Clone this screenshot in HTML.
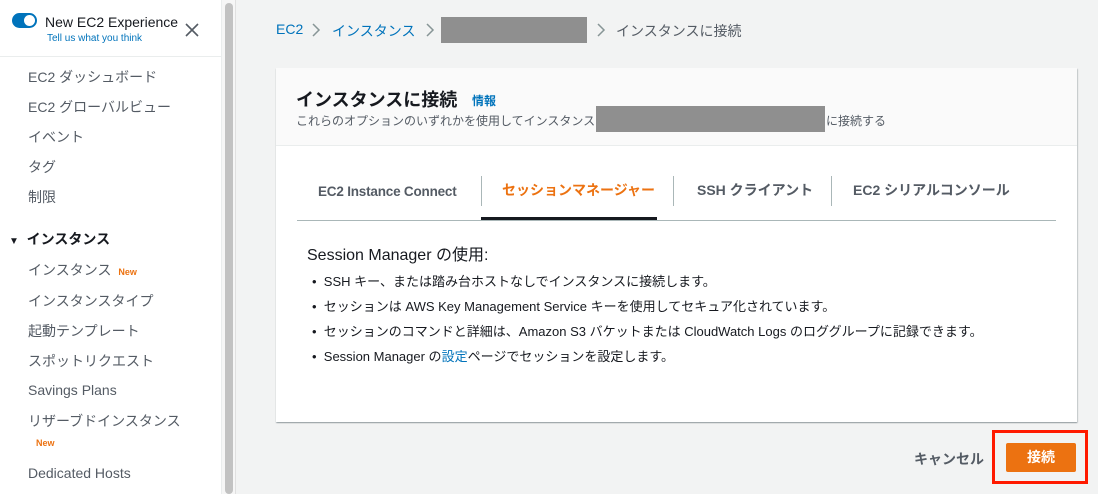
<!DOCTYPE html>
<html><head><meta charset="utf-8"><style>
*{margin:0;padding:0;box-sizing:border-box}
body{width:1098px;height:494px;overflow:hidden;background:#f2f3f3;font-family:"Liberation Sans","Noto Sans CJK JP",sans-serif;position:relative;color:#16191f}
.abs{position:absolute;white-space:nowrap}
#side{position:absolute;left:0;top:0;width:222px;height:494px;background:#fff;border-right:1px solid #eaeded}
#sb{position:absolute;left:222px;top:0;width:14px;height:494px;background:#f6f6f6;border-right:1px solid #e0e0e0}
#sb div{position:absolute;left:3px;top:3px;width:8px;height:491px;border-radius:4px;background:#c2c2c2}
.nav{position:absolute;left:28px;font-size:14px;color:#545b64}
.gray{background:#8f8f8f;position:absolute}
.chev{position:absolute;top:23px}
.tab{position:absolute;top:181px;height:20px;line-height:20px;font-size:14px;font-weight:bold;color:#545b64;white-space:nowrap}
</style></head><body>
<div id="side">
 <div class="abs" style="left:12px;top:13px;width:25px;height:15px;border-radius:8px;background:#0073bb"></div>
 <div class="abs" style="left:24px;top:15px;width:11px;height:11px;border-radius:50%;background:#fff"></div>
 <div class="abs" style="left:45px;top:14px;font-size:14px;color:#16191f">New EC2 Experience</div>
 <div class="abs" style="left:47px;top:33px;font-size:10px;color:#0073bb">Tell us what you think</div>
 <svg class="abs" style="left:184px;top:22px" width="16" height="16"><path d="M2 2L14 14M14 2L2 14" stroke="#545b64" stroke-width="1.6"/></svg>
 <div class="abs" style="left:0;top:56px;width:221px;height:1px;background:#eaeded"></div>
 <div class="nav" style="top:67px">EC2 ダッシュボード</div>
 <div class="nav" style="top:97px">EC2 グローバルビュー</div>
 <div class="nav" style="top:127px">イベント</div>
 <div class="nav" style="top:157px">タグ</div>
 <div class="nav" style="top:187px">制限</div>
 <div class="abs" style="left:9px;top:229px;font-size:14px;font-weight:bold;color:#16191f"><span style="font-size:10px">▼</span>&nbsp; インスタンス</div>
 <div class="nav" style="top:260px">インスタンス <span style="font-size:9px;color:#ec7211;font-weight:bold;margin-left:3px">New</span></div>
 <div class="nav" style="top:291px">インスタンスタイプ</div>
 <div class="nav" style="top:321px">起動テンプレート</div>
 <div class="nav" style="top:351px">スポットリクエスト</div>
 <div class="nav" style="top:382px">Savings Plans</div>
 <div class="nav" style="top:411px">リザーブドインスタンス</div>
 <div class="abs" style="left:36px;top:438px;font-size:9px;color:#ec7211;font-weight:bold">New</div>
 <div class="nav" style="top:465px">Dedicated Hosts</div>
</div>
<div id="sb"><div></div></div>
<div class="abs" style="left:276px;top:21px;font-size:14px;color:#0073bb">EC2</div>
<svg class="chev" style="left:311px" width="10" height="14"><path d="M2 1L8 7L2 13" fill="none" stroke="#879596" stroke-width="1.5"/></svg>
<div class="abs" style="left:332px;top:21px;font-size:14px;color:#0073bb">インスタンス</div>
<svg class="chev" style="left:425px" width="10" height="14"><path d="M2 1L8 7L2 13" fill="none" stroke="#879596" stroke-width="1.5"/></svg>
<div class="gray" style="left:441px;top:17px;width:146px;height:26px"></div>
<svg class="chev" style="left:596px" width="10" height="14"><path d="M2 1L8 7L2 13" fill="none" stroke="#879596" stroke-width="1.5"/></svg>
<div class="abs" style="left:616px;top:21px;font-size:14px;color:#545b64">インスタンスに接続</div>

<div class="abs" style="left:276px;top:68px;width:801px;height:354px;background:#fff;box-shadow:0 1px 1px rgba(0,28,36,.3),1px 1px 1px rgba(0,28,36,.15)">
 <div style="position:absolute;left:0;top:0;width:801px;height:78px;background:#fafafa;border-bottom:1px solid #eaeded"></div>
 <div class="abs" style="left:20px;top:18px;font-size:18px;font-weight:bold">インスタンスに接続</div>
 <div class="abs" style="left:196px;top:24px;font-size:12px;font-weight:bold;color:#0073bb">情報</div>
 <div class="abs" style="left:20px;top:44px;font-size:12px;color:#545b64">これらのオプションのいずれかを使用してインスタンス</div>
 <div class="gray" style="left:320px;top:38px;width:229px;height:26px"></div>
 <div class="abs" style="left:550px;top:44px;font-size:12px;color:#545b64">に接続する</div>
 <div class="tab" style="left:42px;top:114px;font-size:13.5px;letter-spacing:-0.2px">EC2 Instance Connect</div>
 <div class="abs" style="left:205px;top:108px;width:1px;height:30px;background:#aab7b8"></div>
 <div class="tab" style="left:226px;top:112px;color:#ec7211">セッションマネージャー</div>
 <div class="abs" style="left:205px;top:149px;width:176px;height:3px;background:#16191f"></div>
 <div class="abs" style="left:397px;top:108px;width:1px;height:30px;background:#aab7b8"></div>
 <div class="tab" style="left:421px;top:112px">SSH クライアント</div>
 <div class="abs" style="left:555px;top:108px;width:1px;height:30px;background:#aab7b8"></div>
 <div class="tab" style="left:577px;top:112px">EC2 シリアルコンソール</div>
 <div class="abs" style="left:21px;top:152px;width:759px;height:1px;background:#aab7b8"></div>
 <div class="abs" style="left:31px;top:173px;font-size:16px">Session Manager の使用:</div>
 <div class="abs" style="left:36px;top:201px;font-size:13px;line-height:25px">
  • &nbsp;SSH キー、または踏み台ホストなしでインスタンスに接続します。<br>
  • &nbsp;セッションは AWS Key Management Service キーを使用してセキュア化されています。<br>
  • &nbsp;セッションのコマンドと詳細は、Amazon S3 バケットまたは CloudWatch Logs のロググループに記録できます。<br>
  • &nbsp;Session Manager の<span style="color:#0073bb">設定</span>ページでセッションを設定します。
 </div>
</div>
<div class="abs" style="left:914px;top:449px;font-size:14px;font-weight:bold;color:#545b64">キャンセル</div>
<div class="abs" style="left:992px;top:430px;width:96px;height:54px;border:3px solid #ff1a00"></div>
<div class="abs" style="left:1006px;top:443px;width:70px;height:29px;background:#ec7211;border-radius:2px;color:#fff;font-size:14px;font-weight:bold;text-align:center;line-height:29px">接続</div>
</body></html>
